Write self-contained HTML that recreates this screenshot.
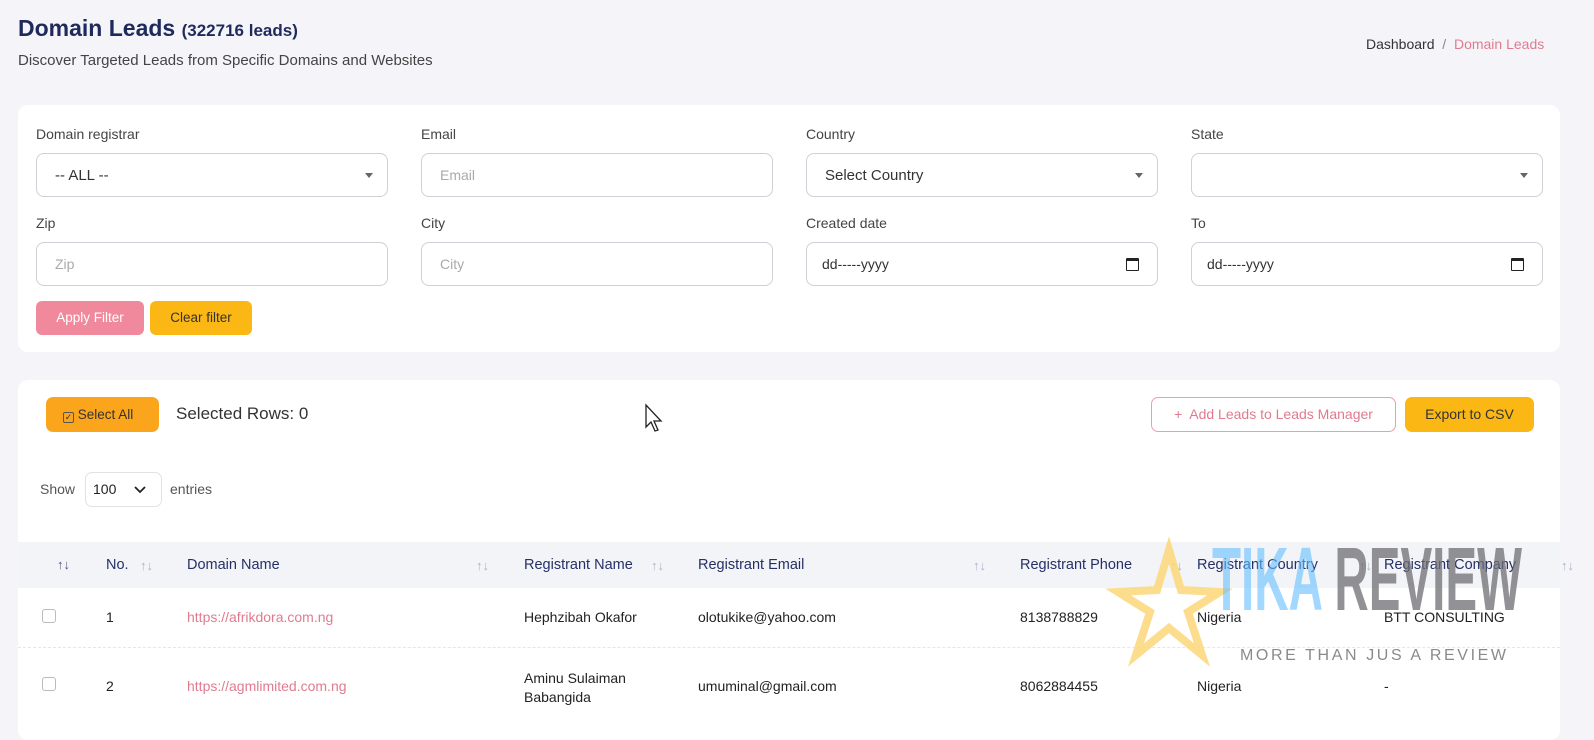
<!DOCTYPE html>
<html><head><meta charset="utf-8"><style>
*{box-sizing:border-box;margin:0;padding:0}
body{width:1594px;height:732px;overflow:hidden;background:#f5f5f9;font-family:"Liberation Sans",sans-serif;position:relative;color:#333}
.a{position:absolute;white-space:nowrap}
.card{position:absolute;background:#fff;border-radius:10px}
.lbl{font-size:14px;color:#444}
.inp{position:absolute;height:44px;width:352px;border:1px solid #cfd0d6;border-radius:8px;background:#fff;font-size:15px;padding:13px 0 0 18px;color:#333}
.ph{color:#aaa;font-size:14px}
.caret{position:absolute;right:14px;top:19px;width:0;height:0;border-left:4.5px solid transparent;border-right:4.5px solid transparent;border-top:5px solid #666}
.cal{position:absolute;right:18px;top:15px;width:13px;height:13px;border:1.5px solid #222;border-top-width:3px;border-radius:1px}
.th{font-size:14.5px;color:#263066}
.sort{font-size:13px;color:#aab2cc}
.td{font-size:14px;color:#222}
.pink{color:#e07b8f}
.cb{position:absolute;width:14px;height:14px;border:1px solid #bbb;border-radius:3px;background:#fff}
</style></head><body>
<div class="a" style="left:18px;top:15px;font-size:23px;font-weight:bold;color:#1f2a5c">Domain Leads <span style="font-size:17px">(322716 leads)</span></div>
<div class="a" style="left:18px;top:52px;font-size:15px;color:#444">Discover Targeted Leads from Specific Domains and Websites</div>
<div class="a" style="left:1366px;top:36px;font-size:14px;color:#333">Dashboard <span style="color:#888">&nbsp;/&nbsp;</span> <span class="pink">Domain Leads</span></div>

<div class="card" style="left:18px;top:105px;width:1542px;height:247px"></div>
<div class="a lbl" style="left:36px;top:126px">Domain registrar</div>
<div class="a lbl" style="left:421px;top:126px">Email</div>
<div class="a lbl" style="left:806px;top:126px">Country</div>
<div class="a lbl" style="left:1191px;top:126px">State</div>
<div class="inp" style="left:36px;top:153px">-- ALL --<div class="caret"></div></div>
<div class="inp ph" style="left:421px;top:153px">Email</div>
<div class="inp" style="left:806px;top:153px">Select Country<div class="caret"></div></div>
<div class="inp" style="left:1191px;top:153px"><div class="caret"></div></div>
<div class="a lbl" style="left:36px;top:215px">Zip</div>
<div class="a lbl" style="left:421px;top:215px">City</div>
<div class="a lbl" style="left:806px;top:215px">Created date</div>
<div class="a lbl" style="left:1191px;top:215px">To</div>
<div class="inp ph" style="left:36px;top:242px">Zip</div>
<div class="inp ph" style="left:421px;top:242px">City</div>
<div class="inp" style="left:806px;top:242px;font-size:14px;padding-left:15px">dd-----yyyy<div class="cal"></div></div>
<div class="inp" style="left:1191px;top:242px;font-size:14px;padding-left:15px">dd-----yyyy<div class="cal"></div></div>
<div class="a" style="left:36px;top:301px;width:108px;height:34px;background:#f0899b;border-radius:6px;color:#fff;font-size:13.5px;text-align:center;line-height:34px">Apply Filter</div>
<div class="a" style="left:150px;top:301px;width:102px;height:34px;background:#fbb714;border-radius:6px;color:#333;font-size:13.5px;text-align:center;line-height:34px">Clear filter</div>

<div class="card" style="left:18px;top:380px;width:1542px;height:360px"></div>
<div class="a" style="left:46px;top:397px;width:113px;height:35px;background:#fba51c;border-radius:7px;font-size:13.5px;line-height:35px;color:#333;padding-left:17px"><span style="display:inline-block;width:11px;height:11px;border:1px solid #555;border-radius:2px;vertical-align:-1px;font-size:9px;line-height:9px;text-align:center">✓</span> Select All</div>
<div class="a" style="left:176px;top:404px;font-size:17px;color:#333">Selected Rows: 0</div>
<div class="a" style="left:1151px;top:397px;width:245px;height:35px;border:1px solid #e2a2b0;border-radius:7px;color:#e07b8f;font-size:14px;line-height:33px;text-align:center">+&nbsp; Add Leads to Leads Manager</div>
<div class="a" style="left:1405px;top:397px;width:129px;height:35px;background:#fbb714;border-radius:7px;color:#333;font-size:14px;line-height:35px;text-align:center">Export to CSV</div>
<div class="a" style="left:40px;top:481px;font-size:14px;color:#555">Show</div>
<div class="a" style="left:85px;top:472px;width:77px;height:35px;border:1px solid #e2e2e6;border-radius:7px;font-size:14px;line-height:33px;padding-left:7px;color:#222">100 <svg style="position:absolute;left:48px;top:13px" width="12" height="8" viewBox="0 0 12 8"><path d="M1 1 L6 6 L11 1" fill="none" stroke="#222" stroke-width="1.8"/></svg></div>
<div class="a" style="left:170px;top:481px;font-size:14px;color:#555">entries</div>

<div class="a" style="left:18px;top:542px;width:1542px;height:46px;background:#f3f4f8"></div>
<div class="a sort" style="left:57px;top:557px;color:#4a5585">↑↓</div>
<div class="a th" style="left:106px;top:557px">No.</div><div class="a sort" style="left:140px;top:558px">↑↓</div>
<div class="a th" style="left:187px;top:557px">Domain Name</div><div class="a sort" style="left:476px;top:558px">↑↓</div>
<div class="a th" style="left:524px;top:557px">Registrant Name</div><div class="a sort" style="left:651px;top:558px">↑↓</div>
<div class="a th" style="left:698px;top:557px">Registrant Email</div><div class="a sort" style="left:973px;top:558px">↑↓</div>
<div class="a th" style="left:1020px;top:557px">Registrant Phone</div><div class="a sort" style="left:1170px;top:558px">↑↓</div>
<div class="a th" style="left:1197px;top:557px">Registrant Country</div><div class="a sort" style="left:1359px;top:558px">↑↓</div>
<div class="a th" style="left:1384px;top:557px">Registrant Company</div><div class="a sort" style="left:1561px;top:558px">↑↓</div>

<div class="cb" style="left:42px;top:609px"></div>
<div class="a td" style="left:106px;top:609px">1</div>
<div class="a td pink" style="left:187px;top:609px">https://afrikdora.com.ng</div>
<div class="a td" style="left:524px;top:609px">Hephzibah Okafor</div>
<div class="a td" style="left:698px;top:609px">olotukike@yahoo.com</div>
<div class="a td" style="left:1020px;top:609px">8138788829</div>
<div class="a td" style="left:1197px;top:609px">Nigeria</div>
<div class="a td" style="left:1384px;top:609px">BTT CONSULTING</div>
<div class="a" style="left:18px;top:647px;width:1542px;border-top:1px dashed #e6e6ea"></div>
<div class="cb" style="left:42px;top:677px"></div>
<div class="a td" style="left:106px;top:678px">2</div>
<div class="a td pink" style="left:187px;top:678px">https://agmlimited.com.ng</div>
<div class="a td" style="left:524px;top:669px;line-height:19px">Aminu Sulaiman<br>Babangida</div>
<div class="a td" style="left:698px;top:678px">umuminal@gmail.com</div>
<div class="a td" style="left:1020px;top:678px">8062884455</div>
<div class="a td" style="left:1197px;top:678px">Nigeria</div>
<div class="a td" style="left:1384px;top:678px">-</div>

<!-- watermark -->
<svg class="a" style="left:0;top:0" width="1594" height="732" viewBox="0 0 1594 732">
<polygon points="1169,550 1181,590 1220,592 1188,612 1202,655 1169,628 1136,655 1150,612 1118,592 1157,590" fill="none" stroke="#fcd77a" stroke-width="8" stroke-linejoin="miter" opacity=".85"/>
<text x="1212" y="610" font-family="Liberation Sans" font-weight="bold" font-size="90" textLength="310" lengthAdjust="spacingAndGlyphs"><tspan fill="rgba(100,190,255,.6)">TIKA </tspan><tspan fill="rgba(110,110,115,.75)">REVIEW</tspan></text>
<text x="1240" y="660" font-family="Liberation Sans" font-size="16" fill="#8a8a8a" textLength="266" lengthAdjust="spacing">MORE THAN JUS A REVIEW</text>
</svg>
<svg class="a" style="left:644px;top:403px" width="22" height="30" viewBox="0 0 22 30"><path d="M2 2 L2 24 L7 19 L11 28 L14 27 L10 18 L17 18 Z" fill="#fff" stroke="#222" stroke-width="1.3"/></svg>
</body></html>
